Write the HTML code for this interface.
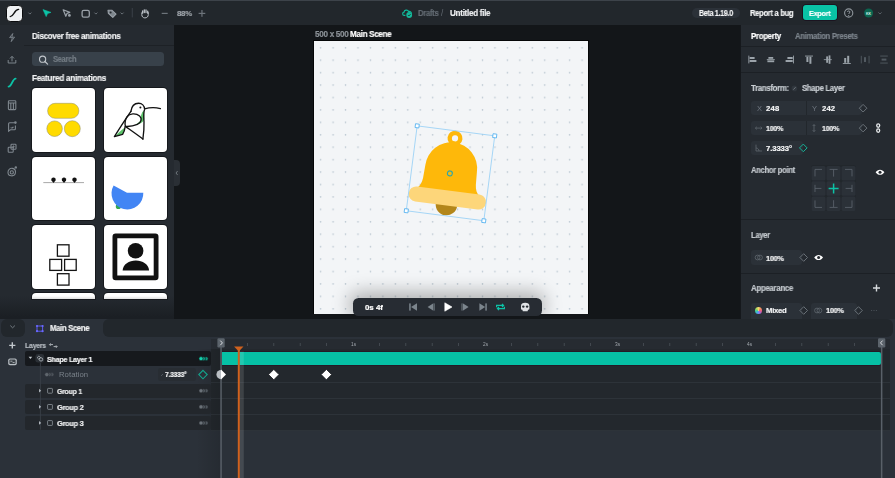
<!DOCTYPE html>
<html><head><meta charset="utf-8"><style>
html,body{margin:0;padding:0;}
body{width:895px;height:478px;overflow:hidden;position:relative;background:#22272c;font-family:"Liberation Sans",sans-serif;}
.a{position:absolute;}
.tx{position:absolute;white-space:nowrap;transform-origin:0 0;will-change:transform;font-family:"Liberation Sans",sans-serif;}
svg{position:absolute;overflow:visible;}

</style></head><body>
<!-- ================= TOOLBAR ================= -->
<div class="a" style="left:0;top:0;width:895px;height:25px;background:#22272c"></div>
<div class="a" style="left:0;top:0;width:895px;height:1px;background:#3d434a"></div>
<!-- logo -->
<div class="a" style="left:6.4px;top:4.6px;width:15px;height:15px;border:1.4px solid #0b0c0e;border-radius:4.2px;background:#eef0f2"></div>
<svg style="left:0;top:0" width="895" height="25" viewBox="0 0 895 25">
  <path d="M10.2,16.6 C13.8,16.6 14.2,9.4 18.6,9.4" stroke="#111" stroke-width="1.4" fill="none" stroke-linecap="round"/>
  <!-- chevrons -->
  <path d="M28.4,12.6 L29.9,14.1 L31.4,12.6" stroke="#6a7178" stroke-width="1" fill="none"/>
  <path d="M94.4,12.6 L95.9,14.1 L97.4,12.6" stroke="#6a7178" stroke-width="1" fill="none"/>
  <path d="M120.6,12.6 L122.1,14.1 L123.6,12.6" stroke="#6a7178" stroke-width="1" fill="none"/>
  <!-- teal select arrow -->
  <path d="M43,9.6 L51,12.4 L47.6,13.4 L46.2,16.6 Z" fill="#0cc2a6" stroke="#0cc2a6" stroke-width="0.6" stroke-linejoin="round"/>
  <!-- node select -->
  <path d="M63.2,9.8 L69.8,12.4 L67,13.4 L65.8,16.3 Z" fill="none" stroke="#9aa1a8" stroke-width="1.2" stroke-linejoin="round"/>
  <circle cx="69.4" cy="15.4" r="1.4" fill="#9aa1a8"/>
  <!-- square -->
  <rect x="82.1" y="10.4" width="7.2" height="6.8" rx="1.6" fill="none" stroke="#9aa1a8" stroke-width="1.3"/>
  <!-- tag -->
  <path d="M108,10.2 L111.8,10.2 L116,14.2 L112.8,17.4 L108.4,13.4 Z" fill="#7d858c" stroke="#9aa1a8" stroke-width="1.1" stroke-linejoin="round"/>
  <circle cx="110.6" cy="12.6" r="1" fill="#22272c"/>
  <!-- separator -->
  <rect x="131.8" y="8" width="0.9" height="9.4" fill="#3d434a"/>
  <!-- hand -->
  <g fill="none" stroke="#b9bfc5" stroke-linecap="round">
    <path d="M142.6,13.2 L142.6,10.8 M144.3,12.6 L144.3,9.8 M146,12.6 L146,10 M147.7,13.2 L147.7,11.2" stroke-width="1.3"/>
    <path d="M141.8,12.8 L141.8,14.6 C141.8,16.8 143.2,17.9 144.9,17.9 C146.8,17.9 148.3,16.8 148.3,14.4 L148.3,12.6" stroke-width="1"/>
  </g>
  <!-- minus / plus -->
  <rect x="161.7" y="12.8" width="6" height="1.2" fill="#6d747b"/>
  <rect x="198.6" y="12.8" width="6.7" height="1.2" fill="#6d747b"/>
  <rect x="201.35" y="10" width="1.2" height="6.8" fill="#6d747b"/>
  <!-- drafts cloud check -->
  <path d="M405.4,15.4 L404.2,15.4 C402.4,15.4 402,12.6 404,12.2 C404.2,9.9 407.6,9.3 408.6,11.4 C410.2,11.1 411.6,12.3 411.2,13.8" fill="none" stroke="#0fb99b" stroke-width="1.2"/>
  <circle cx="409.2" cy="15" r="2.9" fill="#14b89a"/>
  <path d="M407.9,15 L408.9,16 L410.6,14.1" stroke="#22272c" stroke-width="0.8" fill="none"/>
  <!-- help -->
  <circle cx="848.7" cy="13" r="4.1" fill="none" stroke="#8f969c" stroke-width="1.1"/>
  <path d="M847.4,12 C847.4,10.6 850,10.6 850,12 C850,13 848.7,13 848.7,14" fill="none" stroke="#aab0b6" stroke-width="0.8"/>
  <circle cx="848.7" cy="15.4" r="0.5" fill="#aab0b6"/>
  <!-- avatar -->
  <circle cx="868.6" cy="13" r="4.5" fill="#0b6650"/>
  <text x="868.6" y="14.6" font-size="3.6" font-weight="700" fill="#cfeee6" text-anchor="middle" font-family="Liberation Sans">KK</text>
  <path d="M878.4,12.4 L880,14 L881.6,12.4" stroke="#5f666d" stroke-width="0.9" fill="none"/>
</svg>
<div class="a" style="left:691.8px;top:7.6px;width:48px;height:10.7px;border-radius:5.5px;background:#2b3138"></div>
<div class="a" style="left:803.1px;top:5.4px;width:33.5px;height:15px;border-radius:3px;background:#09c2a5;box-shadow:0 0 0 0.8px #1a0f1c"></div>
<!-- ================= LEFT RAIL + PANEL ================= -->
<div class="a" style="left:0;top:25px;width:174px;height:294px;background:#252a30"></div>
<div class="a" style="left:24px;top:45px;width:150px;height:1px;background:#1d2126"></div>
<div class="a" style="left:32px;top:52px;width:132px;height:14px;border-radius:3.5px;background:#38414a"></div>
<svg style="left:0;top:25px" width="174" height="294" viewBox="0 25 174 294">
  <!-- search icon -->
  <circle cx="42.6" cy="59.2" r="3.1" fill="none" stroke="#c2c7cc" stroke-width="1.1"/>
  <path d="M44.9,61.5 L47.6,64.2" stroke="#c2c7cc" stroke-width="1.2" stroke-linecap="round"/>
  <!-- rail icons -->
  <path d="M12.8,33.5 L9.6,37.6 L12.4,37.6 L11.2,41.6 L14.6,37.2 L11.8,37.2 Z" fill="none" stroke="#7d858c" stroke-width="0.9" stroke-linejoin="round"/>
  <path d="M8.2,60 L8.2,63 L15.8,63 L15.8,60 M12,61.4 L12,56.4 M10,58.4 L12,56.4 L14,58.4" fill="none" stroke="#7d858c" stroke-width="1"/>
  <path d="M8.6,86.6 C11.6,86.6 12.6,78.6 15.6,78.6" fill="none" stroke="#0cc2a6" stroke-width="1.9" stroke-linecap="round"/>
  <g fill="none" stroke="#7f878e" stroke-width="1.1">
    <rect x="8.4" y="100.8" width="7.4" height="8.8" rx="0.8"/>
    <path d="M8.4,103 L15.8,103 M10.8,103 L10.8,109.6 M13.4,103 L13.4,109.6"/>
    <path d="M14.4,122.8 L9.6,122.8 C9,122.8 8.6,123.2 8.6,123.8 L8.6,131.2 L10.4,129.8 L14.4,129.8 C15,129.8 15.4,129.4 15.4,128.8 L15.4,125.6"/>
    <path d="M10.6,127.6 C11.6,128.2 12.8,128 13.4,126.8"/>
    <rect x="11" y="144.2" width="5" height="5" rx="0.8"/>
    <rect x="8.2" y="147.2" width="5" height="5" rx="0.8"/>
    <path d="M13.5,145.4 L13.5,148 M12.2,146.7 L14.8,146.7" stroke-width="0.8"/>
    <path d="M8,172.2 C8,169.4 10.4,168 12.4,168.4 C14.6,168.8 15.8,170.8 15.4,173 C15,175.2 13,176 11.2,175.8 C9.2,175.6 8,174.2 8,172.2 Z"/>
    <circle cx="11.8" cy="172.4" r="1.6"/>
  </g>
  <circle cx="15.4" cy="122.6" r="1.3" fill="#7f878e"/>
  <circle cx="15.8" cy="167.4" r="1.2" fill="#7f878e"/>
</svg>
<!-- cards -->
<div class="a" style="left:32px;top:88px;width:63.2px;height:63.5px;border-radius:4px;background:#fff;box-shadow:0 0 0 1px #15181c"></div>
<div class="a" style="left:104px;top:88px;width:63.2px;height:63.5px;border-radius:4px;background:#fff;box-shadow:0 0 0 1px #15181c"></div>
<div class="a" style="left:32px;top:156.5px;width:63.2px;height:63.5px;border-radius:4px;background:#fff;box-shadow:0 0 0 1px #15181c"></div>
<div class="a" style="left:104px;top:156.5px;width:63.2px;height:63.5px;border-radius:4px;background:#fff;box-shadow:0 0 0 1px #15181c"></div>
<div class="a" style="left:32px;top:225px;width:63.2px;height:63.5px;border-radius:4px;background:#fff;box-shadow:0 0 0 1px #15181c"></div>
<div class="a" style="left:104px;top:225px;width:63.2px;height:63.5px;border-radius:4px;background:#fff;box-shadow:0 0 0 1px #15181c"></div>
<div class="a" style="left:32px;top:292.8px;width:63.2px;height:6.7px;border-radius:4px 4px 0 0;background:#fff;box-shadow:0 0 0 1px #15181c"></div>
<div class="a" style="left:104px;top:292.8px;width:63.2px;height:6.7px;border-radius:4px 4px 0 0;background:#fff;box-shadow:0 0 0 1px #15181c"></div>
<svg style="left:32px;top:88px" width="64" height="64" viewBox="0 0 64 64">
  <rect x="15.6" y="15.3" width="31.3" height="15" rx="7.5" fill="#ffdb00" stroke="#8a8a70" stroke-width="0.5"/>
  <circle cx="22.6" cy="40.7" r="7.8" fill="#ffdb00" stroke="#8a8a70" stroke-width="0.5"/>
  <circle cx="40.3" cy="40.7" r="8" fill="#ffdb00" stroke="#8a8a70" stroke-width="0.5"/>
</svg>
<svg style="left:104px;top:88px" width="64" height="64" viewBox="0 0 64 64">
  <path d="M10.8,48.4 L18.6,46.2 C20,44.2 20.6,42 20.8,39.6 C17,42.4 13.4,45.6 10.8,48.4 Z" fill="#5cc26a"/>
  <path d="M39.8,22.6 C37.2,24.6 36.6,28.6 36.8,31.6 C36,34 33.6,35.6 31,36.6 C35.4,36.4 39.6,34.4 40.2,31 C40.2,28 40,25 39.8,22.6 Z" fill="#5cc26a"/>
  <g fill="none" stroke="#111" stroke-width="1.35" stroke-linecap="round" stroke-linejoin="round">
    <path d="M26.9,23.4 C27.6,17.6 31,15.2 34.6,15.2 C38,15.2 40.4,17.8 40.6,21"/>
    <path d="M40.6,20.8 C45.6,19.4 51.4,19.2 56.4,20.6"/>
    <path d="M40.4,22 C39.4,25 39.8,30 40,34 C40.2,40 39.6,46 38.9,51"/>
    <path d="M26.9,23.4 C21.6,31 15.8,40 10.4,48.6 L18.6,46.4 C20.2,44 20.8,41.4 21.2,38.6"/>
    <path d="M21.4,38.4 C27,42.4 33,46.6 38.9,51"/>
    <path d="M23.2,28.6 C25.4,25.6 31.6,24.6 35.6,28 C38.2,30.4 37.6,34.6 33.4,36.4 C29.6,38 24.6,38.6 21.4,38.4 C20.6,34.6 21.4,31 23.2,28.6 Z"/>
  </g>
  <circle cx="36.4" cy="19.6" r="1" fill="#111"/>
</svg>
<svg style="left:32px;top:156.5px" width="64" height="64" viewBox="0 0 64 64">
  <rect x="11.3" y="25.1" width="40.7" height="1" fill="#a9a9a9"/>
  <path d="M21.5,26 L19.5,23.6 A2.2,2.2 0 1 1 23.5,23.6 Z" fill="#111"/>
  <path d="M32,26 L30,23.6 A2.2,2.2 0 1 1 34,23.6 Z" fill="#111"/>
  <path d="M42.5,26 L40.5,23.6 A2.2,2.2 0 1 1 44.5,23.6 Z" fill="#111"/>
</svg>
<svg style="left:104px;top:156.5px" width="64" height="64" viewBox="0 0 64 64">
  <circle cx="14.4" cy="49.4" r="2.6" fill="#34a853"/>
  <path d="M9.6,28.6 L23,35.8 L39.3,35.8 A15.9,15.9 0 1 1 9.6,28.6 Z" fill="#4285f4"/>
</svg>
<svg style="left:32px;top:225px" width="64" height="64" viewBox="0 0 64 64">
  <g fill="none" stroke="#141414" stroke-width="1.3">
    <rect x="25.4" y="19.8" width="11.6" height="11.4"/>
    <rect x="17.8" y="34.4" width="11.8" height="11"/>
    <rect x="32.6" y="34.4" width="11.6" height="11"/>
    <rect x="25.4" y="48.7" width="11.6" height="11.4"/>
  </g>
</svg>
<svg style="left:104px;top:225px" width="64" height="64" viewBox="0 0 64 64">
  <rect x="10.9" y="10.9" width="41.2" height="41.9" rx="0.8" fill="none" stroke="#111" stroke-width="4.8"/>
  <circle cx="31.6" cy="25.8" r="7.8" fill="#111"/>
  <path d="M18.6,45.6 C19,39 25,35.4 31.8,35.4 C38.6,35.4 44.6,39 45.1,45.6 Z" fill="#111"/>
</svg>
<div class="a" style="left:0;top:296px;width:174px;height:23px;background:linear-gradient(rgba(28,32,37,0),#1b1f24 90%)"></div>
<!-- ================= CANVAS ================= -->
<div class="a" style="left:174px;top:25px;width:566px;height:294px;background:#131619"></div>
<div class="a" style="left:314px;top:40.6px;width:274px;height:273.8px;background-color:#f3f5f7;box-shadow:0 0 0 1px #050607"></div>
<svg style="left:314px;top:40.6px" width="274" height="274" viewBox="0 0 274 274">
  <defs><pattern id="dots" x="0.4" y="0.2" width="12.45" height="12.43" patternUnits="userSpaceOnUse"><circle cx="6.25" cy="6.5" r="0.8" fill="#b9c6d0"/></pattern></defs>
  <rect x="0" y="0" width="274" height="274" fill="url(#dots)"/>
</svg>
<!-- player shadow -->
<div class="a" style="left:353.2px;top:297.5px;width:188px;height:18.4px;border-radius:6px;box-shadow:0 -2px 18px 4px rgba(0,0,0,0.28)"></div>
<div class="a" style="left:174px;top:314.4px;width:566px;height:5px;background:#131619"></div>
<div class="a" style="left:353.2px;top:297.5px;width:188.6px;height:18.6px;border-radius:5.5px;background:#272c33"></div>
<svg style="left:0;top:0" width="895" height="478" viewBox="0 0 895 478">
  <!-- player icons -->
  <g fill="#7c858d">
    <rect x="409.2" y="303.4" width="1.5" height="7.2"/>
    <path d="M417,303.2 L417,310.8 L411,307 Z"/>
    <path d="M433.4,303.2 L433.4,310.8 L427.6,307 Z"/>
    <rect x="433.6" y="303.4" width="1.3" height="7.2" fill="#5d656c"/>
    <path d="M462.8,303.2 L462.8,310.8 L468.6,307 Z"/>
    <rect x="461.3" y="303.4" width="1.3" height="7.2" fill="#5d656c"/>
    <path d="M479.4,303.2 L479.4,310.8 L485.2,307 Z"/>
    <rect x="485.3" y="303.4" width="1.5" height="7.2"/>
  </g>
  <path d="M444.8,302.8 L444.8,311.2 L452,307 Z" fill="#ffffff" stroke="#ffffff" stroke-width="0.6" stroke-linejoin="round"/>
  <g fill="none" stroke="#0cc2a6" stroke-width="1.2">
    <path d="M496.6,307.2 L496.6,305.4 L503.6,305.4 M502,303.8 L503.6,305.4 L502,307"/>
    <path d="M504.4,306.8 L504.4,308.6 L497.4,308.6 M499,310.2 L497.4,308.6 L499,307"/>
  </g>
  <path d="M521,306 C521,303.8 522.6,302.8 525.2,302.8 C527.8,302.8 529.4,303.8 529.4,306 L529.4,308.4 C529.4,309.4 528.8,309.8 528,309.8 L527.6,311.2 L522.8,311.2 L522.4,309.8 C521.6,309.8 521,309.4 521,308.4 Z" fill="#dfe2e5"/>
  <circle cx="523.3" cy="306.6" r="1.2" fill="#272c33"/><circle cx="527.1" cy="306.6" r="1.2" fill="#272c33"/>
  <!-- bell -->
  <g transform="translate(450.5,173.3) rotate(7.33)">
    <circle cx="0" cy="31.5" r="10.8" fill="#b3861a"/>
    <circle cx="0" cy="-35.3" r="5.3" fill="none" stroke="#feb80a" stroke-width="4.4"/>
    <path d="M-26,-5 A26,26 0 0 1 26,-5 L26.6,8 C27,13 28.6,16.2 31,18.4 L-31,18.4 C-28.6,16.2 -27,13 -26.6,8 Z" fill="#feb80a"/>
    <rect x="-39" y="17.4" width="78" height="15" rx="7.5" fill="#fdd67a"/>
    <circle cx="-0.6" cy="0.2" r="2.5" fill="none" stroke="#2aa6ae" stroke-width="1.1"/>
    <rect x="-39.1" y="-42.8" width="78.2" height="85.6" fill="none" stroke="#97d0f6" stroke-width="0.8"/>
    <g fill="#fff" stroke="#4daef0" stroke-width="0.8">
      <rect x="-41" y="-44.7" width="3.8" height="3.8"/>
      <rect x="37.2" y="-44.7" width="3.8" height="3.8"/>
      <rect x="37.2" y="40.9" width="3.8" height="3.8"/>
      <rect x="-41" y="40.9" width="3.8" height="3.8"/>
    </g>
  </g>
</svg>
<!-- panel collapse handle -->
<div class="a" style="left:174px;top:160px;width:6px;height:26px;border-radius:0 4px 4px 0;background:#2a2f35"></div>
<svg style="left:174px;top:160px" width="6" height="26" viewBox="0 0 6 26"><path d="M3.6,11 L2,13 L3.6,15" stroke="#7d858c" stroke-width="0.8" fill="none"/></svg>
<!-- ================= RIGHT PANEL ================= -->
<div class="a" style="left:740px;top:25px;width:155px;height:294px;background:#252a30"></div>
<div class="a" style="left:740px;top:25px;width:1px;height:294px;background:#15181c"></div>
<div class="a" style="left:741px;top:46.2px;width:154px;height:1px;background:#1c2025"></div>
<div class="a" style="left:741px;top:72px;width:154px;height:1px;background:#1c2025"></div>
<div class="a" style="left:741px;top:219.2px;width:154px;height:1px;background:#1c2025"></div>
<div class="a" style="left:741px;top:272.5px;width:154px;height:1px;background:#1c2025"></div>
<!-- fields -->
<div class="a" style="left:750.9px;top:101px;width:111px;height:14.2px;border-radius:3px;background:#2b3138"></div>
<div class="a" style="left:805.8px;top:101px;width:1px;height:14.2px;background:#22272c"></div>
<div class="a" style="left:750.9px;top:121px;width:111px;height:14px;border-radius:3px;background:#2b3138"></div>
<div class="a" style="left:805.8px;top:121px;width:1px;height:14px;background:#22272c"></div>
<div class="a" style="left:750.9px;top:140.7px;width:52px;height:13.9px;border-radius:3px;background:#2b3138"></div>
<div class="a" style="left:751px;top:250.1px;width:51px;height:14.9px;border-radius:3px;background:#2b3138"></div>
<div class="a" style="left:751px;top:302.8px;width:51px;height:16px;border-radius:3px 3px 0 0;background:#2b3138"></div>
<div class="a" style="left:810.7px;top:302.8px;width:46px;height:16px;border-radius:3px 3px 0 0;background:#2b3138"></div>
<!-- anchor grid -->
<div class="a" style="left:811px;top:165.4px;width:45px;height:45.9px;border-radius:3px;background:#22272c"></div>
<svg style="left:0;top:0" width="895" height="478" viewBox="0 0 895 478">
  <g fill="#2b3138">
    <rect x="811.5" y="165.9" width="14" height="14.6" rx="1.5"/><rect x="826.5" y="165.9" width="14" height="14.6" rx="1.5"/><rect x="841.5" y="165.9" width="14" height="14.6" rx="1.5"/>
    <rect x="811.5" y="181.2" width="14" height="14.6" rx="1.5"/><rect x="826.5" y="181.2" width="14" height="14.6" rx="1.5"/><rect x="841.5" y="181.2" width="14" height="14.6" rx="1.5"/>
    <rect x="811.5" y="196.4" width="14" height="14.6" rx="1.5"/><rect x="826.5" y="196.4" width="14" height="14.6" rx="1.5"/><rect x="841.5" y="196.4" width="14" height="14.6" rx="1.5"/>
  </g>
  <g fill="none" stroke="#59616a" stroke-width="0.9">
    <path d="M815,176.4 L815,169.4 L822,169.4"/>
    <path d="M829.6,169.4 L837.6,169.4 M833.6,169.4 L833.6,176.6"/>
    <path d="M845,169.4 L852,169.4 L852,176.4"/>
    <path d="M815,184.8 L815,192 M815,188.4 L821.4,188.4"/>
    <path d="M852,184.8 L852,192 M852,188.4 L845.6,188.4"/>
    <path d="M815,200.4 L815,207.4 L822,207.4"/>
    <path d="M829.6,207.4 L837.6,207.4 M833.6,207.4 L833.6,200.2"/>
    <path d="M845,207.4 L852,207.4 L852,200.4"/>
  </g>
  <path d="M828.6,188.4 L838.6,188.4 M833.6,183.4 L833.6,193.4" stroke="#0cc2a6" stroke-width="1.5" fill="none"/>
  <!-- align icons -->
  <g fill="#9ba3aa">
    <rect x="748.4" y="55.6" width="0.9" height="7.8"/><rect x="749.6" y="57" width="5" height="2"/><rect x="749.6" y="60" width="6.8" height="2"/>
    <rect x="766.8" y="59.2" width="8" height="0.9"/><rect x="768.4" y="57" width="4.8" height="1.8"/><rect x="767.4" y="60.4" width="6.8" height="1.8"/>
    <rect x="793" y="55.6" width="0.9" height="7.8"/><rect x="787.4" y="57" width="5.3" height="2"/><rect x="785.6" y="60" width="7.1" height="2"/>
    <rect x="805" y="55.6" width="8" height="0.9"/><rect x="806.4" y="56.8" width="2" height="5.2"/><rect x="809.4" y="56.8" width="2" height="7"/>
    <rect x="823.8" y="59.2" width="8" height="0.9" fill="#8c949b"/><rect x="826.2" y="56.4" width="1.8" height="6.4"/><rect x="828.6" y="55.4" width="1.8" height="8.4"/>
    <rect x="842.8" y="63" width="8" height="0.9"/><rect x="844.2" y="58" width="2" height="4.8"/><rect x="847.2" y="55.8" width="2" height="7"/>
  </g>
  <g fill="#525a61">
    <rect x="860.8" y="55.8" width="0.9" height="7.6"/><rect x="868.6" y="55.8" width="0.9" height="7.6"/><rect x="864" y="57.2" width="2" height="4.8"/>
    <rect x="880.2" y="55.6" width="7.6" height="0.9"/><rect x="880.2" y="62.6" width="7.6" height="0.9"/><rect x="881.6" y="58.6" width="4.8" height="2"/>
  </g>
  <!-- transform icon -->
  <circle cx="794.4" cy="88.4" r="2.8" fill="#30363d"/>
  <path d="M793.4,89.6 L795.6,87.2" stroke="#7d858c" stroke-width="0.8"/>
  <!-- diamonds -->
  <g fill="none" stroke="#70787f" stroke-width="0.9">
    <path d="M863.1,104.4 L866.9,108.2 L863.1,112 L859.3,108.2 Z"/>
    <path d="M863.1,124.3 L866.9,128.1 L863.1,131.9 L859.3,128.1 Z"/>
    <path d="M803.7,253.7 L807.5,257.5 L803.7,261.3 L799.9,257.5 Z"/>
    <path d="M803.7,306.7 L807.5,310.5 L803.7,314.3 L799.9,310.5 Z"/>
    <path d="M858.5,306.7 L862.3,310.5 L858.5,314.3 L854.7,310.5 Z"/>
  </g>
  <path d="M803.3,144.1 L807.1,147.9 L803.3,151.7 L799.5,147.9 Z" fill="none" stroke="#16b397" stroke-width="1"/>
  <!-- labels icons -->
  <g fill="none" stroke="#5f676f" stroke-width="0.8">
    <path d="M755.4,128.1 L762,128.1 M756.8,126.8 L755.4,128.1 L756.8,129.4 M760.6,126.8 L762,128.1 L760.6,129.4"/>
    <path d="M814,124.6 L814,131.6 M812.7,126 L814,124.6 L815.3,126 M812.7,130.2 L814,131.6 L815.3,130.2"/>
    <path d="M756,144.6 L756,151 L762,151 M756,148 C758,148 759,149.6 759,151"/>
    <circle cx="757.6" cy="257.5" r="2.4"/><circle cx="760" cy="257.5" r="2.4"/>
    <circle cx="817" cy="310.5" r="2.4"/><circle cx="819.4" cy="310.5" r="2.4"/>
  </g>
  <!-- link icon -->
  <path d="M878.2,123.8 C876.2,123.8 876.2,127.4 878.2,127.4 C880.2,127.4 880.2,123.8 878.2,123.8 Z M878.2,128.8 C876.2,128.8 876.2,132.4 878.2,132.4 C880.2,132.4 880.2,128.8 878.2,128.8 Z" fill="none" stroke="#e6e9eb" stroke-width="1.3"/>
  <!-- eyes -->
  <path d="M875.6,172.3 C877.8,168.9 882.2,168.9 884.4,172.3 C882.2,175.7 877.8,175.7 875.6,172.3 Z" fill="#fff"/>
  <circle cx="880" cy="172.3" r="1.5" fill="#252a30"/>
  <path d="M814.2,257.5 C816.4,254.1 820.8,254.1 823,257.5 C820.8,260.9 816.4,260.9 814.2,257.5 Z" fill="#fff"/>
  <circle cx="818.6" cy="257.5" r="1.5" fill="#252a30"/>
  <!-- plus -->
  <path d="M873,288 L880,288 M876.5,284.5 L876.5,291.5" stroke="#d6dadd" stroke-width="1.4"/>
  <!-- color wheel -->
  
  <defs><linearGradient id="cw" x1="0" y1="0" x2="1" y2="1"><stop offset="0" stop-color="#f2c94c"/><stop offset="0.35" stop-color="#e8516d"/><stop offset="0.65" stop-color="#7b61ff"/><stop offset="1" stop-color="#27c4a8"/></linearGradient></defs>
  <g fill="#4f565d"><circle cx="871.6" cy="310.5" r="0.6"/><circle cx="874" cy="310.5" r="0.6"/><circle cx="876.4" cy="310.5" r="0.6"/></g>
</svg>
<div class="a" style="left:755px;top:306.8px;width:7.4px;height:7.4px;border-radius:50%;background:conic-gradient(#f5d76e,#f08a5d,#e85a8a,#9b6bf0,#4aa8f0,#3ccf9a,#a5d85a,#f5d76e)"></div>
<!-- ================= TIMELINE ================= -->
<div class="a" style="left:0;top:319px;width:895px;height:159px;background:#2b3139"></div>
<div class="a" style="left:1px;top:319px;width:24px;height:17.5px;border-radius:6px;background:#22272c"></div>
<div class="a" style="left:103px;top:319px;width:790px;height:17.5px;border-radius:6px;background:#22272c"></div>
<!-- ruler & track area -->
<div class="a" style="left:211px;top:338.5px;width:678.5px;height:10px;background:#262b31"></div>
<div class="a" style="left:211px;top:348.5px;width:678.5px;height:82px;background:#23282d"></div>
<div class="a" style="left:211px;top:382px;width:678.5px;height:1px;background:#2d3339"></div>
<div class="a" style="left:211px;top:398.2px;width:678.5px;height:1px;background:#2d3339"></div>
<div class="a" style="left:211px;top:414.4px;width:678.5px;height:1px;background:#2d3339"></div>
<div class="a" style="left:211px;top:430px;width:678.5px;height:1px;background:#2d3339"></div>
<div class="a" style="left:196px;top:349px;width:25px;height:129px;background:linear-gradient(90deg,rgba(0,0,0,0),rgba(0,0,0,0.13))"></div>
<!-- layer rows -->
<div class="a" style="left:24.7px;top:351px;width:186.4px;height:14.7px;border-radius:2px;background:#16191d"></div>
<div class="a" style="left:24.7px;top:383.6px;width:186.4px;height:14.2px;border-radius:2px;background:#23272c"></div>
<div class="a" style="left:24.7px;top:399.7px;width:186.4px;height:14.2px;border-radius:2px;background:#23272c"></div>
<div class="a" style="left:24.7px;top:415.7px;width:186.4px;height:14.2px;border-radius:2px;background:#23272c"></div>
<div class="a" style="left:157.8px;top:368px;width:38.7px;height:13px;border-radius:3px;background:#282d33"></div>
<!-- teal bar -->
<div class="a" style="left:221.5px;top:351px;width:660px;height:15px;background:#241a27"></div>
<div class="a" style="left:222px;top:352px;width:659.2px;height:13px;border-radius:0 2px 2px 0;background:#06c0a5"></div>
<svg style="left:0;top:0" width="895" height="478" viewBox="0 0 895 478">
  <!-- ruler ticks -->
  <g fill="#4a5158">
    <rect x="247" y="343" width="0.8" height="3"/><rect x="273.4" y="343" width="0.8" height="3"/><rect x="299.8" y="343" width="0.8" height="3"/><rect x="326.2" y="343" width="0.8" height="3"/>
    <rect x="379" y="343" width="0.8" height="3"/><rect x="405.4" y="343" width="0.8" height="3"/><rect x="431.8" y="343" width="0.8" height="3"/><rect x="458.2" y="343" width="0.8" height="3"/>
    <rect x="511" y="343" width="0.8" height="3"/><rect x="537.4" y="343" width="0.8" height="3"/><rect x="563.8" y="343" width="0.8" height="3"/><rect x="590.2" y="343" width="0.8" height="3"/>
    <rect x="643" y="343" width="0.8" height="3"/><rect x="669.4" y="343" width="0.8" height="3"/><rect x="695.8" y="343" width="0.8" height="3"/><rect x="722.2" y="343" width="0.8" height="3"/>
    <rect x="775" y="343" width="0.8" height="3"/><rect x="801.4" y="343" width="0.8" height="3"/><rect x="827.8" y="343" width="0.8" height="3"/><rect x="854.2" y="343" width="0.8" height="3"/>
  </g>
  <!-- start/end lines -->
  <rect x="220.3" y="347" width="1.5" height="131" fill="#596068"/>
  <rect x="880.9" y="347" width="1.5" height="131" fill="#596068"/>
  <rect x="217.4" y="338.3" width="7.3" height="9.2" rx="1.2" fill="#5b636b"/>
  <path d="M220.3,340.6 L222.4,342.9 L220.3,345.2" stroke="#e6e9ec" stroke-width="0.9" fill="none"/>
  <rect x="878" y="338.3" width="7.3" height="9.2" rx="1.2" fill="#5b636b"/>
  <path d="M882.6,340.6 L880.5,342.9 L882.6,345.2" stroke="#e6e9ec" stroke-width="0.9" fill="none"/>
  <!-- playhead band -->
  <rect x="239.8" y="351.5" width="4" height="126.5" fill="#ffffff" fill-opacity="0.12"/>
  <rect x="237.8" y="349" width="2" height="129" fill="#d0621e"/>
  <path d="M234.1,346.4 L243.5,346.4 L238.8,351.6 Z" fill="#d0621e"/>
  <!-- keyframes -->
  <path d="M273.8,369.4 L279,374.6 L273.8,379.8 L268.6,374.6 Z" fill="#fff" stroke="#1a1d21" stroke-width="0.8"/>
  <path d="M326.4,369.4 L331.6,374.6 L326.4,379.8 L321.2,374.6 Z" fill="#fff" stroke="#1a1d21" stroke-width="0.8"/>
  <path d="M221,369.6 L226,374.6 L221,379.6 Z" fill="#fff"/>
  <path d="M221,370 A4.6,4.6 0 0 0 221,379.2 Z" fill="#b9bec3"/>
  <!-- layer toggles -->
  <circle cx="206.2" cy="358.7" r="2" fill="#0e9a82" stroke="#16191d" stroke-width="0.6"/><circle cx="203.6" cy="358.7" r="2" fill="#0e9a82" stroke="#16191d" stroke-width="0.6"/><circle cx="201" cy="358.7" r="2.1" fill="#14d2ae" stroke="#16191d" stroke-width="0.6"/>
  <circle cx="206.2" cy="390.8" r="2" fill="#50575e" stroke="#23272c" stroke-width="0.6"/><circle cx="203.6" cy="390.8" r="2" fill="#50575e" stroke="#23272c" stroke-width="0.6"/><circle cx="201" cy="390.8" r="2.1" fill="#6a7178" stroke="#23272c" stroke-width="0.6"/>
  <circle cx="206.2" cy="406.9" r="2" fill="#50575e" stroke="#23272c" stroke-width="0.6"/><circle cx="203.6" cy="406.9" r="2" fill="#50575e" stroke="#23272c" stroke-width="0.6"/><circle cx="201" cy="406.9" r="2.1" fill="#6a7178" stroke="#23272c" stroke-width="0.6"/>
  <circle cx="206.2" cy="423" r="2" fill="#50575e" stroke="#23272c" stroke-width="0.6"/><circle cx="203.6" cy="423" r="2" fill="#50575e" stroke="#23272c" stroke-width="0.6"/><circle cx="201" cy="423" r="2.1" fill="#6a7178" stroke="#23272c" stroke-width="0.6"/>
  <circle cx="52" cy="374.6" r="2" fill="#4c535a" stroke="#2b3139" stroke-width="0.6"/><circle cx="49.4" cy="374.6" r="2" fill="#4c535a" stroke="#2b3139" stroke-width="0.6"/><circle cx="46.8" cy="374.6" r="2.1" fill="#5f666d" stroke="#2b3139" stroke-width="0.6"/>
  <path d="M203,370.4 L207.2,374.6 L203,378.8 L198.8,374.6 Z" fill="none" stroke="#13a68c" stroke-width="1.1"/>
  <!-- small angle icon in timeline value -->
  <path d="M161,376 L163,374" stroke="#5f676f" stroke-width="0.7"/>
  <!-- tree line -->
  <rect x="39.9" y="362.6" width="0.9" height="67" fill="#3a4047"/>
  <!-- carets -->
  <path d="M28.6,356.8 L32.2,356.8 L30.4,359 Z" fill="#c8cdd2"/>
  <path d="M39,388.8 L41.2,390.7 L39,392.6 Z" fill="#aeb4ba"/>
  <path d="M39,404.9 L41.2,406.8 L39,408.7 Z" fill="#aeb4ba"/>
  <path d="M39,421 L41.2,422.9 L39,424.8 Z" fill="#aeb4ba"/>
  <!-- shape layer icon -->
  <rect x="35.4" y="354" width="8.8" height="8.6" rx="2.4" fill="#2a2f35"/>
  <path d="M37.2,357.6 L38.8,356 L40.4,357.6 L38.8,359.2 Z" fill="none" stroke="#b4babf" stroke-width="0.8"/>
  <circle cx="41" cy="359.4" r="1.7" fill="none" stroke="#b4babf" stroke-width="0.8"/>
  <!-- group square icons -->
  <g fill="none" stroke="#8e959c" stroke-width="0.8">
    <rect x="47.6" y="388.4" width="4.8" height="4.8" rx="0.6"/>
    <rect x="47.6" y="404.5" width="4.8" height="4.8" rx="0.6"/>
    <rect x="47.6" y="420.6" width="4.8" height="4.8" rx="0.6"/>
  </g>
  <!-- left column icons -->
  <path d="M9.2,345.4 L15.4,345.4 M12.3,342.3 L12.3,348.5" stroke="#c3c8cd" stroke-width="1.4"/>
  <rect x="8.2" y="358.4" width="8.6" height="6.8" rx="1.8" fill="#b9bfc4"/>
  <rect x="9.4" y="359.6" width="6.2" height="4.4" rx="0.8" fill="#3a4046"/>
  <path d="M10.4,361.2 L12.4,361.2 M12.6,362.6 L14.6,362.6" stroke="#c9ced2" stroke-width="0.8"/>
  <!-- chevron in dark box -->
  <path d="M10.3,325.6 L12.6,327.8 L14.9,325.6" stroke="#7d848b" stroke-width="0.9" fill="none"/>
  <!-- main scene icon -->
  <rect x="37" y="326" width="5.6" height="5.2" fill="none" stroke="#5d5cf2" stroke-width="1"/>
  <g fill="#6a68ff"><circle cx="37" cy="326" r="1.1"/><circle cx="42.6" cy="326" r="1.1"/><circle cx="37" cy="331.2" r="1.1"/><circle cx="42.6" cy="331.2" r="1.1"/></g>
  <!-- layers icon -->
  <g fill="none" stroke="#aab0b6" stroke-width="1"><path d="M49.6,344.6 L53,344.6 M50.6,343.4 L49.4,344.6 L50.6,345.8"/><path d="M57,346.6 L53.6,346.6 M56,345.4 L57.2,346.6 L56,347.8"/></g>
</svg>

<div class="tx" style="left:177.10px;top:9.80px;font-size:7.92px;line-height:7.92px;font-weight:700;color:#9ea4aa;-webkit-text-stroke:0.18px #9ea4aa;letter-spacing:-0.300px;transform:scaleX(0.9847);">88%</div>
<div class="tx" style="left:417.50px;top:10.00px;font-size:8.13px;line-height:8.13px;font-weight:700;color:#646c74;-webkit-text-stroke:0.18px #646c74;letter-spacing:-0.300px;transform:scaleX(0.9408);">Drafts</div>
<div class="tx" style="left:441.00px;top:10.00px;font-size:8.13px;line-height:8.13px;font-weight:400;color:#646c74;">/</div>
<div class="tx" style="left:449.50px;top:10.00px;font-size:8.13px;line-height:8.13px;font-weight:700;color:#eceef0;-webkit-text-stroke:0.18px #eceef0;letter-spacing:-0.300px;transform:scaleX(0.9963);">Untitled file</div>
<div class="tx" style="left:699.00px;top:9.90px;font-size:8.13px;line-height:8.13px;font-weight:700;color:#f4f5f6;-webkit-text-stroke:0.18px #f4f5f6;letter-spacing:-0.300px;transform:scaleX(0.8655);">Beta 1.19.0</div>
<div class="tx" style="left:750.30px;top:10.00px;font-size:8.13px;line-height:8.13px;font-weight:700;color:#f4f5f6;-webkit-text-stroke:0.18px #f4f5f6;letter-spacing:-0.300px;transform:scaleX(0.9310);">Report a bug</div>
<div class="tx" style="left:809.30px;top:9.60px;font-size:7.92px;line-height:7.92px;font-weight:700;color:#ffffff;-webkit-text-stroke:0.18px #ffffff;letter-spacing:-0.300px;transform:scaleX(0.9206);">Export</div>
<div class="tx" style="left:32.20px;top:31.60px;font-size:8.77px;line-height:8.77px;font-weight:700;color:#f2f3f4;-webkit-text-stroke:0.18px #f2f3f4;letter-spacing:-0.300px;transform:scaleX(0.9118);">Discover free animations</div>
<div class="tx" style="left:52.80px;top:55.80px;font-size:8.13px;line-height:8.13px;font-weight:700;color:#737c84;-webkit-text-stroke:0.18px #737c84;letter-spacing:-0.300px;transform:scaleX(0.9167);">Search</div>
<div class="tx" style="left:32.40px;top:74.00px;font-size:8.56px;line-height:8.56px;font-weight:700;color:#f2f3f4;-webkit-text-stroke:0.18px #f2f3f4;letter-spacing:-0.300px;transform:scaleX(0.9500);">Featured animations</div>
<div class="tx" style="left:314.70px;top:30.80px;font-size:8.13px;line-height:8.13px;font-weight:700;color:#8a9096;-webkit-text-stroke:0.18px #8a9096;letter-spacing:-0.295px;transform:scaleX(1.0000);">500 x 500</div>
<div class="tx" style="left:349.90px;top:30.80px;font-size:8.13px;line-height:8.13px;font-weight:700;color:#ffffff;-webkit-text-stroke:0.18px #ffffff;letter-spacing:-0.300px;transform:scaleX(0.9900);">Main Scene</div>
<div class="tx" style="left:365.00px;top:304.00px;font-size:7.92px;line-height:7.92px;font-weight:700;color:#ffffff;-webkit-text-stroke:0.18px #ffffff;letter-spacing:-0.026px;transform:scaleX(1.0000);">0s 4f</div>
<div class="tx" style="left:750.70px;top:33.30px;font-size:8.13px;line-height:8.13px;font-weight:700;color:#ffffff;-webkit-text-stroke:0.18px #ffffff;letter-spacing:-0.300px;transform:scaleX(0.9638);">Property</div>
<div class="tx" style="left:795.40px;top:33.30px;font-size:8.13px;line-height:8.13px;font-weight:700;color:#7c848c;-webkit-text-stroke:0.18px #7c848c;letter-spacing:-0.300px;transform:scaleX(0.9450);">Animation Presets</div>
<div class="tx" style="left:750.70px;top:85.10px;font-size:8.13px;line-height:8.13px;font-weight:700;color:#c9ced3;-webkit-text-stroke:0.18px #c9ced3;letter-spacing:-0.300px;transform:scaleX(0.9606);">Transform:</div>
<div class="tx" style="left:801.50px;top:85.10px;font-size:8.13px;line-height:8.13px;font-weight:700;color:#c9ced3;-webkit-text-stroke:0.18px #c9ced3;letter-spacing:-0.300px;transform:scaleX(0.9439);">Shape Layer</div>
<div class="tx" style="left:756.50px;top:104.60px;font-size:7.49px;line-height:7.49px;font-weight:400;color:#6f7780;">X</div>
<div class="tx" style="left:766.00px;top:104.60px;font-size:7.7px;line-height:7.7px;font-weight:700;color:#f4f5f6;-webkit-text-stroke:0.18px #f4f5f6;letter-spacing:0.224px;transform:scaleX(1.0000);">248</div>
<div class="tx" style="left:812.00px;top:104.60px;font-size:7.49px;line-height:7.49px;font-weight:400;color:#6f7780;">Y</div>
<div class="tx" style="left:821.70px;top:104.60px;font-size:7.7px;line-height:7.7px;font-weight:700;color:#f4f5f6;-webkit-text-stroke:0.18px #f4f5f6;letter-spacing:0.124px;transform:scaleX(1.0000);">242</div>
<div class="tx" style="left:766.00px;top:124.50px;font-size:7.7px;line-height:7.7px;font-weight:700;color:#f4f5f6;-webkit-text-stroke:0.18px #f4f5f6;letter-spacing:-0.300px;transform:scaleX(0.9203);">100%</div>
<div class="tx" style="left:821.70px;top:124.50px;font-size:7.7px;line-height:7.7px;font-weight:700;color:#f4f5f6;-webkit-text-stroke:0.18px #f4f5f6;letter-spacing:-0.300px;transform:scaleX(0.9203);">100%</div>
<div class="tx" style="left:766.00px;top:144.80px;font-size:7.7px;line-height:7.7px;font-weight:700;color:#f4f5f6;-webkit-text-stroke:0.18px #f4f5f6;letter-spacing:-0.085px;transform:scaleX(1.0000);">7.3333°</div>
<div class="tx" style="left:750.70px;top:166.80px;font-size:8.13px;line-height:8.13px;font-weight:700;color:#c3c8cd;-webkit-text-stroke:0.18px #c3c8cd;letter-spacing:-0.300px;transform:scaleX(0.9348);">Anchor point</div>
<div class="tx" style="left:750.70px;top:232.00px;font-size:8.13px;line-height:8.13px;font-weight:700;color:#c3c8cd;-webkit-text-stroke:0.18px #c3c8cd;letter-spacing:-0.300px;transform:scaleX(0.9362);">Layer</div>
<div class="tx" style="left:765.90px;top:254.70px;font-size:7.7px;line-height:7.7px;font-weight:700;color:#f4f5f6;-webkit-text-stroke:0.18px #f4f5f6;letter-spacing:-0.300px;transform:scaleX(0.9528);">100%</div>
<div class="tx" style="left:750.70px;top:285.40px;font-size:8.13px;line-height:8.13px;font-weight:700;color:#c3c8cd;-webkit-text-stroke:0.18px #c3c8cd;letter-spacing:-0.300px;transform:scaleX(0.9652);">Appearance</div>
<div class="tx" style="left:766.00px;top:307.20px;font-size:7.7px;line-height:7.7px;font-weight:700;color:#f4f5f6;-webkit-text-stroke:0.18px #f4f5f6;letter-spacing:-0.259px;transform:scaleX(1.0000);">Mixed</div>
<div class="tx" style="left:825.60px;top:307.20px;font-size:7.7px;line-height:7.7px;font-weight:700;color:#f4f5f6;-webkit-text-stroke:0.18px #f4f5f6;letter-spacing:-0.300px;transform:scaleX(0.9528);">100%</div>
<div class="tx" style="left:49.90px;top:325.30px;font-size:8.13px;line-height:8.13px;font-weight:700;color:#f2f3f4;-webkit-text-stroke:0.18px #f2f3f4;letter-spacing:-0.300px;transform:scaleX(0.9420);">Main Scene</div>
<div class="tx" style="left:24.80px;top:341.80px;font-size:7.92px;line-height:7.92px;font-weight:700;color:#b5bbc1;-webkit-text-stroke:0.18px #b5bbc1;letter-spacing:-0.300px;transform:scaleX(0.8819);">Layers</div>
<div class="tx" style="left:47.30px;top:355.60px;font-size:7.7px;line-height:7.7px;font-weight:700;color:#f4f5f6;-webkit-text-stroke:0.18px #f4f5f6;letter-spacing:-0.300px;transform:scaleX(0.9370);">Shape Layer 1</div>
<div class="tx" style="left:58.60px;top:371.00px;font-size:7.7px;line-height:7.7px;font-weight:400;color:#7a828a;letter-spacing:0.070px;transform:scaleX(1.0000);">Rotation</div>
<div class="tx" style="left:165.00px;top:370.80px;font-size:7.28px;line-height:7.28px;font-weight:700;color:#f4f5f6;-webkit-text-stroke:0.18px #f4f5f6;letter-spacing:-0.300px;transform:scaleX(0.9288);">7.3333°</div>
<div class="tx" style="left:57.30px;top:387.60px;font-size:7.7px;line-height:7.7px;font-weight:700;color:#f0f1f2;-webkit-text-stroke:0.18px #f0f1f2;letter-spacing:-0.300px;transform:scaleX(0.9056);">Group 1</div>
<div class="tx" style="left:57.30px;top:403.60px;font-size:7.7px;line-height:7.7px;font-weight:700;color:#f0f1f2;-webkit-text-stroke:0.18px #f0f1f2;letter-spacing:-0.300px;transform:scaleX(0.9641);">Group 2</div>
<div class="tx" style="left:57.30px;top:419.60px;font-size:7.7px;line-height:7.7px;font-weight:700;color:#f0f1f2;-webkit-text-stroke:0.18px #f0f1f2;letter-spacing:-0.300px;transform:scaleX(0.9641);">Group 3</div>
<div class="tx" style="left:351.40px;top:342.60px;font-size:4.82px;line-height:4.82px;font-weight:400;color:#a3a9af;">1s</div>
<div class="tx" style="left:483.40px;top:342.60px;font-size:4.82px;line-height:4.82px;font-weight:400;color:#a3a9af;">2s</div>
<div class="tx" style="left:615.40px;top:342.60px;font-size:4.82px;line-height:4.82px;font-weight:400;color:#a3a9af;">3s</div>
<div class="tx" style="left:747.40px;top:342.60px;font-size:4.82px;line-height:4.82px;font-weight:400;color:#a3a9af;">4s</div>
</body></html>
